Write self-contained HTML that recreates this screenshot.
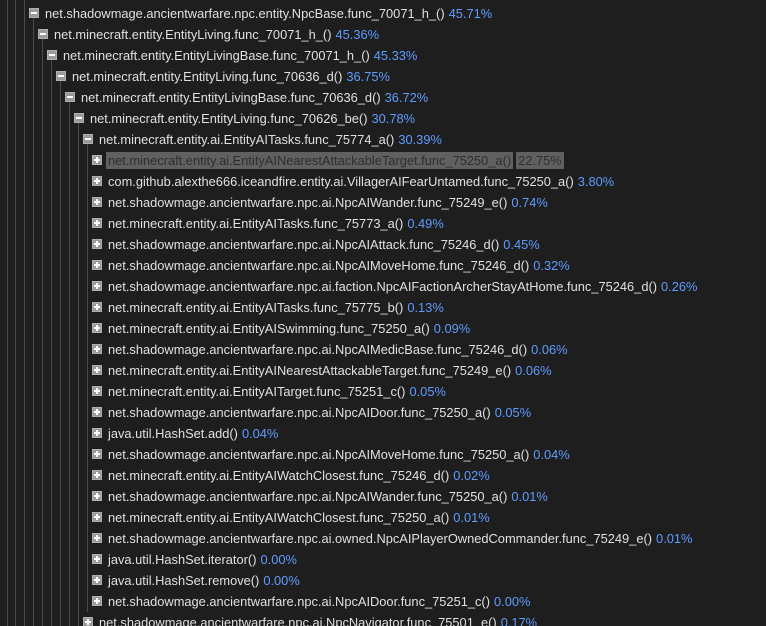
<!DOCTYPE html>
<html><head><style>
html,body{margin:0;padding:0;background:#1e1e1e;width:766px;height:626px;overflow:hidden;position:relative;font-family:"Liberation Sans",sans-serif;}
.l{position:absolute;width:1px;background:#4a4a4a;bottom:0}
.r{position:absolute;height:21px;line-height:21px;white-space:nowrap;font-size:12.85px;color:#e0e0e0}
.b{position:absolute;width:8px;height:8px;background:#9a9a9a;border:1px solid #b0b0b0;top:5px}
.b:before{content:"";position:absolute;left:1px;top:3px;width:6px;height:2px;background:#fff}
.p:after{content:"";position:absolute;left:3px;top:1px;width:2px;height:6px;background:#fff}
.t{position:absolute;top:0}
.c{color:#5f9cff;margin-left:4px}
.h .n{background:#606060;color:#2e2e2e;padding:1px 2px;margin-left:-2px}
.h .c{background:#606060;color:#2e2e2e;padding:1px 2px;margin-left:3px}
</style></head><body>
<div class="l" style="left:7px;top:0"></div>
<div class="l" style="left:15px;top:0"></div>
<div class="l" style="left:24px;top:0"></div>
<div class="l" style="left:33px;top:18px"></div>
<div class="l" style="left:42px;top:39px"></div>
<div class="l" style="left:51px;top:60px"></div>
<div class="l" style="left:60px;top:81px"></div>
<div class="l" style="left:69px;top:102px"></div>
<div class="l" style="left:78px;top:123px"></div>
<div class="l" style="left:87px;top:144px;bottom:14px"></div>
<div id="rows"></div>
<script>
var R=[
[0,0,"net.shadowmage.ancientwarfare.npc.entity.NpcBase.func_70071_h_()","45.71%"],
[1,0,"net.minecraft.entity.EntityLiving.func_70071_h_()","45.36%"],
[2,0,"net.minecraft.entity.EntityLivingBase.func_70071_h_()","45.33%"],
[3,0,"net.minecraft.entity.EntityLiving.func_70636_d()","36.75%"],
[4,0,"net.minecraft.entity.EntityLivingBase.func_70636_d()","36.72%"],
[5,0,"net.minecraft.entity.EntityLiving.func_70626_be()","30.78%"],
[6,0,"net.minecraft.entity.ai.EntityAITasks.func_75774_a()","30.39%"],
[7,1,"net.minecraft.entity.ai.EntityAINearestAttackableTarget.func_75250_a()","22.75%",1],
[7,1,"com.github.alexthe666.iceandfire.entity.ai.VillagerAIFearUntamed.func_75250_a()","3.80%"],
[7,1,"net.shadowmage.ancientwarfare.npc.ai.NpcAIWander.func_75249_e()","0.74%"],
[7,1,"net.minecraft.entity.ai.EntityAITasks.func_75773_a()","0.49%"],
[7,1,"net.shadowmage.ancientwarfare.npc.ai.NpcAIAttack.func_75246_d()","0.45%"],
[7,1,"net.shadowmage.ancientwarfare.npc.ai.NpcAIMoveHome.func_75246_d()","0.32%"],
[7,1,"net.shadowmage.ancientwarfare.npc.ai.faction.NpcAIFactionArcherStayAtHome.func_75246_d()","0.26%"],
[7,1,"net.minecraft.entity.ai.EntityAITasks.func_75775_b()","0.13%"],
[7,1,"net.minecraft.entity.ai.EntityAISwimming.func_75250_a()","0.09%"],
[7,1,"net.shadowmage.ancientwarfare.npc.ai.NpcAIMedicBase.func_75246_d()","0.06%"],
[7,1,"net.minecraft.entity.ai.EntityAINearestAttackableTarget.func_75249_e()","0.06%"],
[7,1,"net.minecraft.entity.ai.EntityAITarget.func_75251_c()","0.05%"],
[7,1,"net.shadowmage.ancientwarfare.npc.ai.NpcAIDoor.func_75250_a()","0.05%"],
[7,1,"java.util.HashSet.add()","0.04%"],
[7,1,"net.shadowmage.ancientwarfare.npc.ai.NpcAIMoveHome.func_75250_a()","0.04%"],
[7,1,"net.minecraft.entity.ai.EntityAIWatchClosest.func_75246_d()","0.02%"],
[7,1,"net.shadowmage.ancientwarfare.npc.ai.NpcAIWander.func_75250_a()","0.01%"],
[7,1,"net.minecraft.entity.ai.EntityAIWatchClosest.func_75250_a()","0.01%"],
[7,1,"net.shadowmage.ancientwarfare.npc.ai.owned.NpcAIPlayerOwnedCommander.func_75249_e()","0.01%"],
[7,1,"java.util.HashSet.iterator()","0.00%"],
[7,1,"java.util.HashSet.remove()","0.00%"],
[7,1,"net.shadowmage.ancientwarfare.npc.ai.NpcAIDoor.func_75251_c()","0.00%"],
[6,1,"net.shadowmage.ancientwarfare.npc.ai.NpcNavigator.func_75501_e()","0.17%"]
];
var h="";
R.forEach(function(r,i){
 var y=3+21*i,bx=29+9*r[0],tx=45+9*r[0];
 h+='<div class="r'+(r[4]?' h':'')+'" style="top:'+y+'px;left:0;width:766px">'+
 '<div class="b'+(r[1]?' p':'')+'" style="left:'+bx+'px"></div>'+
 '<div class="t" style="left:'+tx+'px"><span class="n">'+r[2]+'</span><span class="c">'+r[3]+'</span></div></div>';
});
document.getElementById("rows").innerHTML=h;
</script>
</body></html>
